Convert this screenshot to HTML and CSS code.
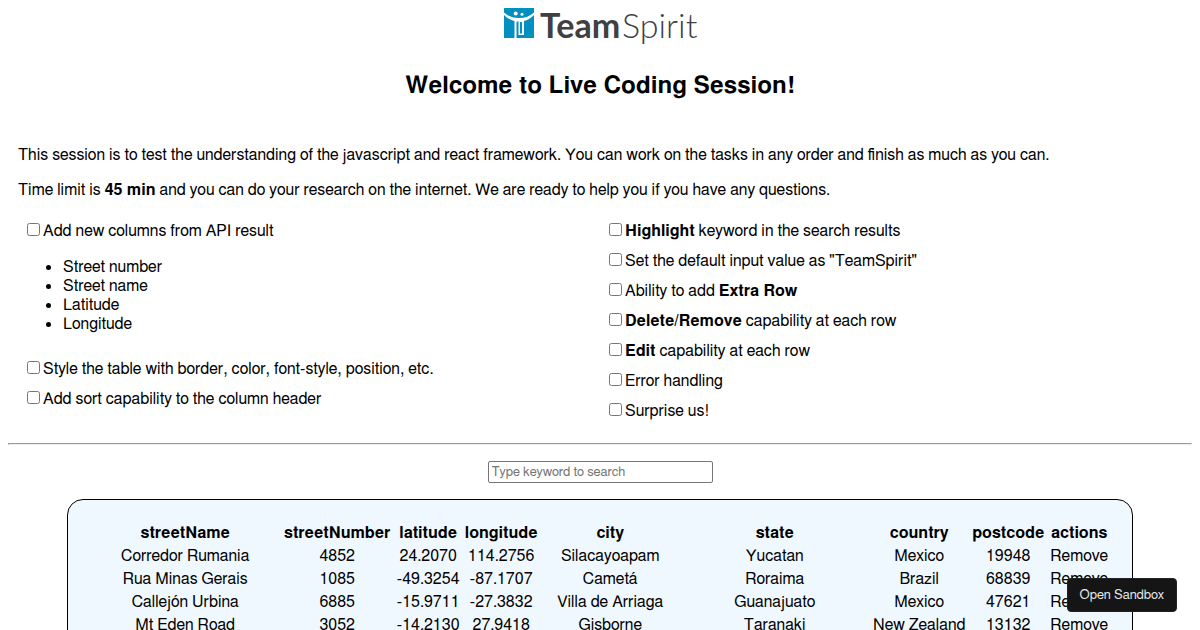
FILE: index.html
```html
<!DOCTYPE html>
<html lang="en">
<head>
<meta charset="utf-8">
<title>Live Coding Session</title>
<link rel="stylesheet" href="styles.css">
</head>
<body>
<header class="header">
  <svg class="logo" width="192" height="38" viewBox="0 0 192 38" role="img" aria-label="TeamSpirit">
    <rect width="30" height="30" fill="#0390c0"/>
    <path d="M0 4.500Q6 10 15 10T30 4.500V7Q25 12 20 13V27H14.500V13.500H12.500V30H10.500V13Q5 12 0 7Z" fill="#fff"/>
    <path d="M16 14H18V25.500H16Z" fill="#0390c0"/>
    <circle cx="11.700" cy="5.500" r="2" fill="#fff"/>
    <circle cx="18" cy="6.300" r="1.500" fill="#fff"/>
    <text class="logo-text logo-bold" x="36" y="30">Team</text>
    <text class="logo-text logo-light" x="118" y="30">Spirit</text>
  </svg>
  <h2 class="title">Welcome to Live Coding Session!</h2>
</header>
<main>
  <section class="intro">
    <p>This session is to test the understanding of the javascript and react framework. You can work on the tasks in any order and finish as much as you can.</p>
    <p>Time limit is <b>45 min</b> and you can do your research on the internet. We are ready to help you if you have any questions.</p>
    <div class="tasks">
      <div class="task-column">
        <div class="task"><input type="checkbox" id="t1"><label for="t1">Add new columns from API result</label>
          <ul class="fields"><li>Street number</li><li>Street name</li><li>Latitude</li><li>Longitude</li></ul>
        </div>
        <div class="task"><input type="checkbox" id="t2"><label for="t2">Style the table with border, color, font-style, position, etc.</label></div>
        <div class="task"><input type="checkbox" id="t3"><label for="t3">Add sort capability to the column header</label></div>
      </div>
      <div class="task-column">
        <div class="task"><input type="checkbox" id="t4"><label for="t4"><b>Highlight</b> keyword in the search results</label></div>
        <div class="task"><input type="checkbox" id="t5"><label for="t5">Set the default input value as "TeamSpirit"</label></div>
        <div class="task"><input type="checkbox" id="t6"><label for="t6">Ability to add <b>Extra Row</b></label></div>
        <div class="task"><input type="checkbox" id="t7"><label for="t7"><b>Delete/Remove</b> capability at each row</label></div>
        <div class="task"><input type="checkbox" id="t8"><label for="t8"><b>Edit</b> capability at each row</label></div>
        <div class="task"><input type="checkbox" id="t9"><label for="t9">Error handling</label></div>
        <div class="task"><input type="checkbox" id="t10"><label for="t10">Surprise us!</label></div>
      </div>
    </div>
  </section>
  <hr class="divider">
  <div class="search"><input class="search-input" type="text" placeholder="Type keyword to search" aria-label="Type keyword to search"></div>
  <div class="card">
    <table class="results">
      <colgroup><col class="c-street"><col class="c-number"><col class="c-lat"><col class="c-long"><col class="c-city"><col class="c-state"><col class="c-country"><col class="c-post"><col class="c-actions"></colgroup>
      <thead><tr><th>streetName</th><th>streetNumber</th><th>latitude</th><th>longitude</th><th>city</th><th>state</th><th>country</th><th>postcode</th><th>actions</th></tr></thead>
      <tbody>
        <tr><td>Corredor Rumania</td><td>4852</td><td>24.2070</td><td>114.2756</td><td>Silacayoapam</td><td>Yucatan</td><td>Mexico</td><td>19948</td><td><button class="remove" type="button">Remove</button></td></tr>
        <tr><td>Rua Minas Gerais</td><td>1085</td><td>-49.3254</td><td>-87.1707</td><td>Cametá</td><td>Roraima</td><td>Brazil</td><td>68839</td><td><button class="remove" type="button">Remove</button></td></tr>
        <tr><td>Callejón Urbina</td><td>6885</td><td>-15.9711</td><td>-27.3832</td><td>Villa de Arriaga</td><td>Guanajuato</td><td>Mexico</td><td>47621</td><td><button class="remove" type="button">Remove</button></td></tr>
        <tr><td>Mt Eden Road</td><td>3052</td><td>-14.2130</td><td>27.9418</td><td>Gisborne</td><td>Taranaki</td><td>New Zealand</td><td>13132</td><td><button class="remove" type="button">Remove</button></td></tr>
      </tbody>
    </table>
  </div>
</main>
<button class="open-sandbox" type="button">Open Sandbox</button>
</body>
</html>
```
FILE: styles.css
```css
body {
  margin: 8px;
  font-family: FreeSans, "Liberation Sans", Arial, sans-serif;
  font-size: 16px;
  line-height: 19px;
  font-kerning: none;
  color: #000;
  background: #fff;
}
.header { text-align: center; }
.logo { display: block; margin: 0 auto 26px; overflow: visible; }
.logo-text { font-family: Lato, sans-serif; font-size: 34px; fill: #404041; font-kerning: normal; }
.logo-bold { font-weight: 700; }
.logo-light { font-weight: 300; }
.title { margin: 0 0 19px; font-size: 24px; line-height: 29px; }
.intro { padding: 10px 10px 9px; }
.intro p { margin: 16px 0; }
.tasks { display: grid; grid-template-columns: 1fr 1fr; }
.task { padding: 4px 5px 5px; line-height: 19px; }
.task input { margin: 3px 3px 3px 4px; }
.fields { margin: 16px 0; padding-left: 40px; line-height: 18px; }
.fields li::marker { font-family: "Liberation Sans", Arial, sans-serif; font-size: 18px; }
.divider { margin: 8px 0 16px; }
.search { display: flex; justify-content: center; margin-bottom: 16px; }
.search-input {
  box-sizing: border-box;
  width: 225px;
  height: 22px;
  padding: 2px 3px 0;
  border: 1px solid #767676;
  border-radius: 2px;
  font-family: inherit;
  font-size: 13px;
}
.card {
  box-sizing: border-box;
  width: 90%;
  margin: 0 auto;
  padding: 21px 20px 20px 21px;
  border: 1px solid #000;
  border-radius: 16px;
  background: #f0f8ff;
}
.results { width: 100%; table-layout: fixed; border-spacing: 2px; text-align: center; }
.results th, .results td { padding: 1px; white-space: nowrap; }
.c-street { width: 188px; }
.c-number { width: 112px; }
.c-lat { width: 66px; }
.c-long { width: 76px; }
.c-city { width: 138px; }
.c-state { width: 187px; }
.c-country { width: 98px; }
.c-post { width: 76px; }
.c-actions { width: 62px; }
.remove {
  display: block;
  margin: 0 auto;
  padding: 0;
  border: 0;
  background: none;
  color: inherit;
  font: inherit;
  cursor: pointer;
}
.open-sandbox {
  position: fixed;
  right: 23px;
  bottom: 18px;
  padding: 9px 12px 7px;
  border: 1px solid #222;
  border-radius: 4px;
  background: #151515;
  color: #e5e5e5;
  font-family: inherit;
  font-size: 13px;
  line-height: 16px;
}
```
